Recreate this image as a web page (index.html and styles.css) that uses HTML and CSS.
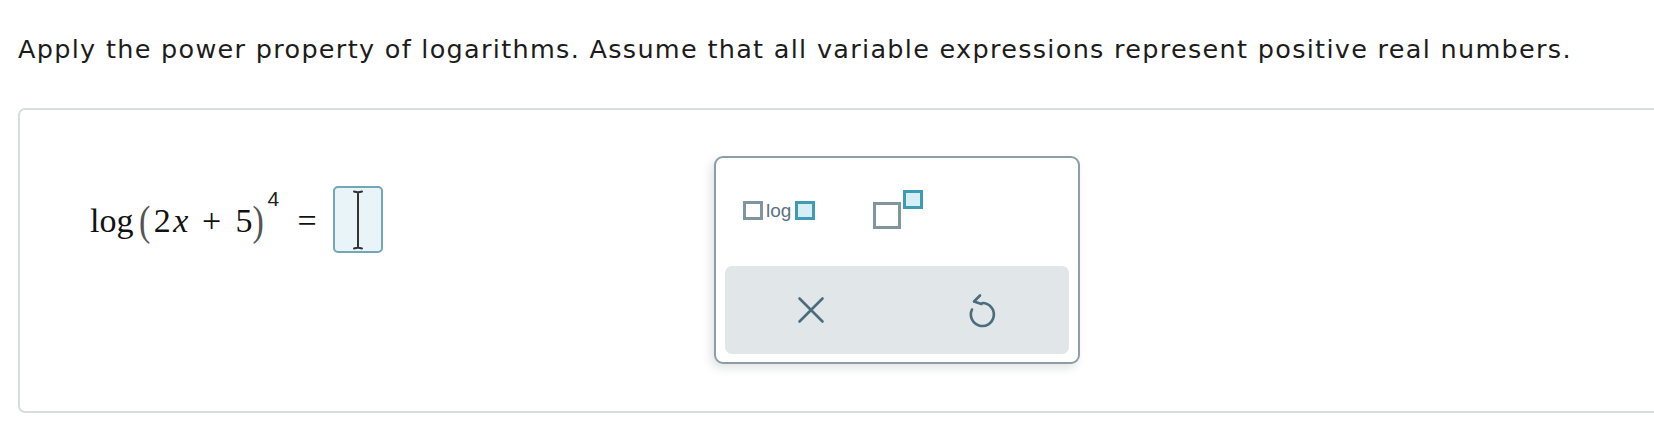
FILE: index.html
```html
<!DOCTYPE html>
<html>
<head>
<meta charset="utf-8">
<link rel="stylesheet" href="styles.css">
</head>
<body>
<div class="page">
  <p class="prompt">Apply the power property of logarithms. Assume that all variable expressions represent positive real numbers.</p>
  <div class="panel">
    <div class="math">
      <span class="t log">log</span>
      <span class="t paren lp">(</span>
      <span class="t two">2</span>
      <span class="t var">x</span>
      <span class="t plus">+</span>
      <span class="t five">5</span>
      <span class="t paren rp">)</span>
      <span class="sup">4</span>
      <span class="t eq">=</span>
      <span class="answer">
        <svg class="cursor" width="14" height="62" viewBox="0 0 14 62">
          <path d="M3 2.5 Q7 4 11 2.5 M7 3.5 V58.5 M3 59.5 Q7 58 11 59.5" fill="none" stroke="#333" stroke-width="2" stroke-linecap="round"/>
        </svg>
      </span>
    </div>
    <div class="keypad">
      <div class="templates">
        <div class="tpl-log">
          <span class="sq gray"></span>
          <span class="log-label">log</span>
          <span class="sq teal"></span>
        </div>
        <div class="tpl-exp">
          <span class="sq gray big"></span>
          <span class="sq teal"></span>
        </div>
      </div>
      <div class="actions">
        <div class="action">
          <svg width="28" height="28" viewBox="0 0 28 28">
            <path d="M2.5 2.5 L25.5 25.5 M25.5 2.5 L2.5 25.5" stroke="#4b6c7b" stroke-width="2.6" stroke-linecap="round" fill="none"/>
          </svg>
        </div>
        <div class="action">
          <svg width="30" height="38" viewBox="0 0 30 38">
            <path d="M14.5 12 A11.5 11.5 0 1 1 4 18.5" stroke="#4b6c7b" stroke-width="2.6" stroke-linecap="round" fill="none"/>
            <path d="M12 4.5 L6 10.5 L13.5 13" stroke="#4b6c7b" stroke-width="2.6" stroke-linecap="round" stroke-linejoin="round" fill="none"/>
          </svg>
        </div>
      </div>
    </div>
  </div>
</div>
</body>
</html>
```
FILE: styles.css
```css
html, body {
  margin: 0;
  padding: 0;
  background: #fff;
  overflow: hidden;
}
.page {
  padding-left: 18px;
}
.prompt {
  margin: 35px 0 0 0;
  font-family: "DejaVu Sans", Verdana, sans-serif;
  font-size: 25.5px;
  letter-spacing: 1.3px;
  line-height: 28px;
  color: #1c1c1c;
  white-space: nowrap;
}
.panel {
  margin-top: 45px;
  margin-right: -30px;
  height: 305px;
  box-sizing: border-box;
  border: 2px solid #d7dde1;
  border-radius: 7px;
  display: flex;
  align-items: flex-start;
  padding: 46px 0 0 70px;
}
.math {
  display: flex;
  align-items: center;
  width: 293px;
  height: 67px;
  margin-top: 30px;
  font-family: "Liberation Serif", "Times New Roman", serif;
  color: #111;
}
.t {
  font-size: 34px;
  line-height: 34px;
  display: block;
  margin-top: 2px;
}
.paren {
  color: #555;
  transform: scaleY(1.27);
}
.lp { margin-left: 5.5px; }
.two { margin-left: 3.5px; }
.var { font-style: italic; margin-left: 2.5px; }
.plus { margin-left: 13.5px; }
.five { margin-left: 14.5px; }
.sup {
  align-self: flex-start;
  margin-top: 2px;
  margin-left: 3.5px;
  font-family: "Liberation Sans", Arial, sans-serif;
  font-size: 21px;
  line-height: 21px;
  color: #222;
}
.eq { margin-left: 18.5px; }
.answer {
  margin-left: auto;
  width: 50px;
  height: 67px;
  box-sizing: border-box;
  border: 2px solid #73a6b6;
  border-radius: 5px;
  background: #e9f4f8;
  display: flex;
  align-items: center;
  justify-content: center;
}
.cursor { display: block; }
.keypad {
  margin-left: 331px;
  width: 366px;
  height: 208px;
  box-sizing: border-box;
  border: 2px solid #8c9ea6;
  border-radius: 9px;
  background: #fff;
  box-shadow: -3px 4px 10px rgba(60, 80, 90, 0.16);
  padding: 0 9px 8px;
  display: flex;
  flex-direction: column;
}
.templates {
  height: 108px;
  display: flex;
  align-items: flex-start;
  padding-left: 18px;
}
.tpl-log {
  display: flex;
  align-items: center;
  margin-top: 43px;
}
.sq {
  display: block;
  width: 20px;
  height: 19px;
  box-sizing: border-box;
  border: 3px solid #7f959f;
  background: #fff;
}
.sq.teal {
  border-color: #3f9ab6;
  background: #d6eef5;
}
.sq.big {
  width: 28px;
  height: 27px;
  margin-top: 12px;
}
.log-label {
  font-family: "Liberation Sans", Arial, sans-serif;
  font-size: 19px;
  line-height: 19px;
  color: #5b7381;
  margin: 0 4px 0 3px;
}
.tpl-exp {
  display: flex;
  align-items: flex-start;
  margin-left: 58px;
  margin-top: 32px;
}
.tpl-exp .teal { margin-left: 2px; }
.actions {
  flex: 1;
  display: flex;
  background: #e1e6e9;
  border-radius: 7px;
}
.action {
  flex: 1;
  display: flex;
  align-items: center;
  justify-content: center;
}
.action svg { display: block; }
```
